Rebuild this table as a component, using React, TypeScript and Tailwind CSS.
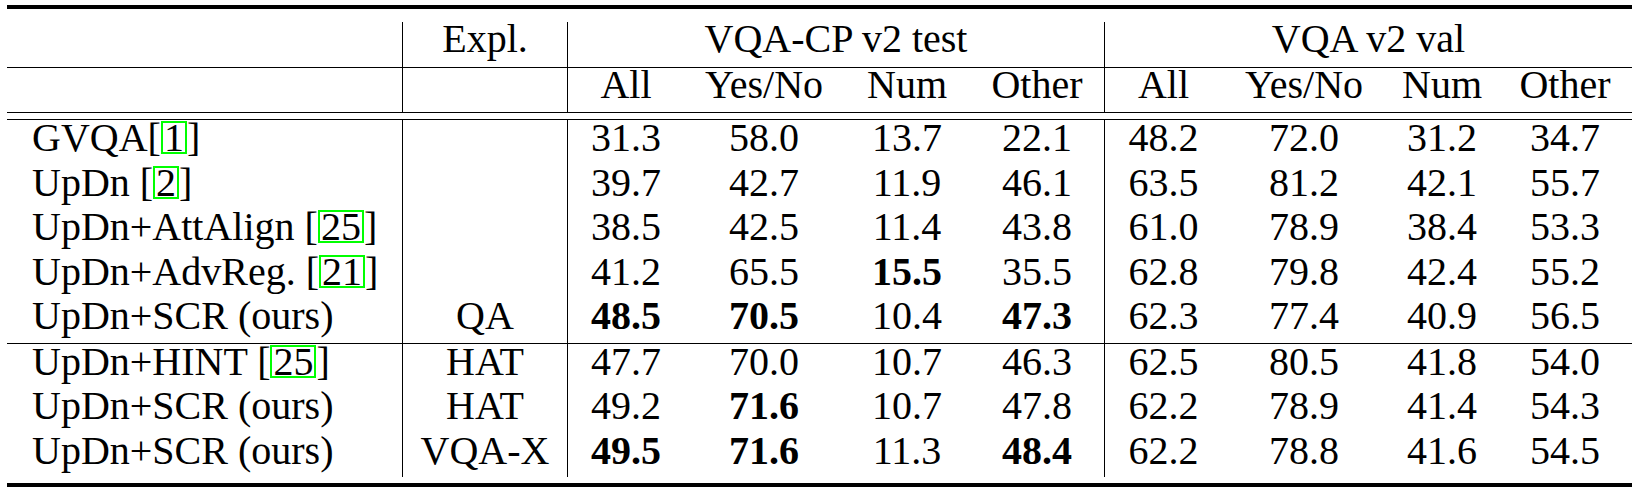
import React from "react"

type Row = {
    name: string
    cite?: string
    space?: boolean
    expl: string
    cp: string[]
    val: string[]
    bold?: number[] // indexes into cp that are bold
}

const rows: Row[] = [
    { name: "GVQA", cite: "1", space: false, expl: "", cp: ["31.3", "58.0", "13.7", "22.1"], val: ["48.2", "72.0", "31.2", "34.7"] },
    { name: "UpDn", cite: "2", space: true, expl: "", cp: ["39.7", "42.7", "11.9", "46.1"], val: ["63.5", "81.2", "42.1", "55.7"] },
    { name: "UpDn+AttAlign", cite: "25", space: true, expl: "", cp: ["38.5", "42.5", "11.4", "43.8"], val: ["61.0", "78.9", "38.4", "53.3"] },
    { name: "UpDn+AdvReg.", cite: "21", space: true, expl: "", cp: ["41.2", "65.5", "15.5", "35.5"], val: ["62.8", "79.8", "42.4", "55.2"], bold: [2] },
    { name: "UpDn+SCR (ours)", expl: "QA", cp: ["48.5", "70.5", "10.4", "47.3"], val: ["62.3", "77.4", "40.9", "56.5"], bold: [0, 1, 3] },
    { name: "UpDn+HINT", cite: "25", space: true, expl: "HAT", cp: ["47.7", "70.0", "10.7", "46.3"], val: ["62.5", "80.5", "41.8", "54.0"] },
    { name: "UpDn+SCR (ours)", expl: "HAT", cp: ["49.2", "71.6", "10.7", "47.8"], val: ["62.2", "78.9", "41.4", "54.3"], bold: [1] },
    { name: "UpDn+SCR (ours)", expl: "VQA-X", cp: ["49.5", "71.6", "11.3", "48.4"], val: ["62.2", "78.8", "41.6", "54.5"], bold: [0, 1, 3] },
]

const subHeads = ["All", "Yes/No", "Num", "Other"]

// column widths picked off the reference so the centres line up
const grid = "grid grid-cols-[395px_165px_117px_160px_126px_134px_118px_164px_112px_134px]"

function Cite({ n }: { n: string }) {
    return (
        <>
            [<span className="inline-block border-2 border-[#00ff00] px-px leading-[29px]">{n}</span>]
        </>
    )
}

function Rule() {
    return <div className="h-px bg-black" />
}

function BodyRow({ row }: { row: Row }) {
    return (
        <div className={`${grid} h-[44.5px] leading-[36px]`}>
            <div className="pl-[25px] whitespace-nowrap">
                {row.name}
                {row.cite && (
                    <>
                        {row.space ? " " : ""}
                        <Cite n={row.cite} />
                    </>
                )}
            </div>
            <div className="border-l border-black text-center">{row.expl}</div>
            {row.cp.map((v, i) => (
                <div
                    key={"cp" + i}
                    className={`text-center ${i === 0 ? "border-l border-black" : ""} ${row.bold?.includes(i) ? "font-bold" : ""}`}
                >
                    {v}
                </div>
            ))}
            {row.val.map((v, i) => (
                <div key={"val" + i} className={`text-center ${i === 0 ? "border-l border-black" : ""}`}>
                    {v}
                </div>
            ))}
        </div>
    )
}

export default function App() {
    return (
        <div className="w-[1638px] h-[493px] bg-white text-black [font-family:'Liberation_Serif','Times_New_Roman',serif] text-[40px]">
            <div className="ml-[7px] w-[1625px] pt-[5px]">
                {/* top rule */}
                <div className="h-[4px] bg-black" />
                <div className="h-[13px]" />

                {/* Header row 1 */}
                <div className={`${grid} h-[45px] leading-[34px]`}>
                    <div />
                    <div className="border-l border-black text-center">Expl.</div>
                    <div className="col-span-4 border-l border-black text-center">VQA-CP v2 test</div>
                    <div className="col-span-4 border-l border-black text-center">VQA v2 val</div>
                </div>
                <Rule />

                {/* Header row 2 */}
                <div className={`${grid} h-[44px] leading-[34px]`}>
                    <div />
                    <div className="border-l border-black" />
                    {subHeads.map((h, i) => (
                        <div key={"a" + h} className={`text-center ${i === 0 ? "border-l border-black" : ""}`}>{h}</div>
                    ))}
                    {subHeads.map((h, i) => (
                        <div key={"b" + h} className={`text-center ${i === 0 ? "border-l border-black" : ""}`}>{h}</div>
                    ))}
                </div>
                <Rule />
                <div className="h-[6px]" />
                <Rule />

                {/* Body */}
                {rows.slice(0, 5).map((r, i) => (
                    <BodyRow key={i} row={r} />
                ))}
                <Rule />
                {rows.slice(5).map((r, i) => (
                    <BodyRow key={i + 5} row={r} />
                ))}

                {/* vertical lines stop short of the bottom rule */}
                <div className={`${grid} h-[6px]`} />
                <div className="h-[4px] bg-black" />
            </div>
        </div>
    )
}
